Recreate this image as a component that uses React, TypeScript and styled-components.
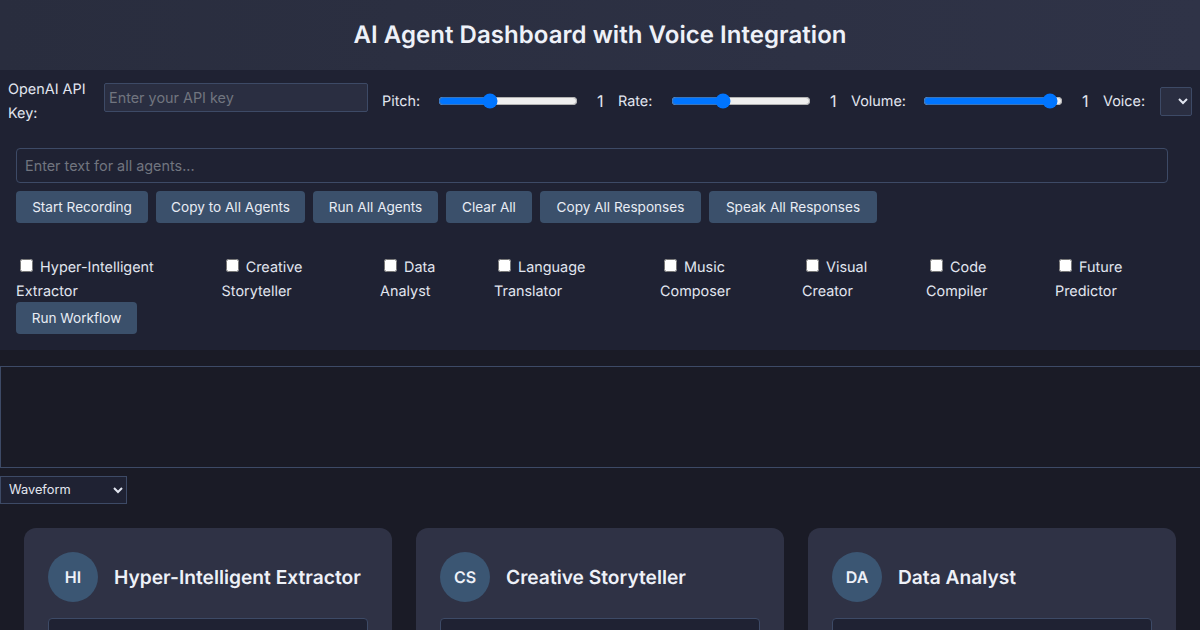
import { Fragment } from 'react';
import styled, { createGlobalStyle } from 'styled-components';

const GlobalStyle = createGlobalStyle`
  html, body {
    margin: 0;
    height: 630px;
    overflow: hidden;
    background: #1a1b26;
  }
  body {
    font-family: Inter, "Liberation Sans", sans-serif;
    font-size: 14.4px;
    line-height: 24px;
    color: #e2e6f0;
    text-rendering: geometricPrecision;
  }
`;

const Header = styled.header`
  height: 70px;
  display: flex;
  align-items: center;
  justify-content: center;
  background: linear-gradient(90deg, #292d3e, #2f3347);
`;

const Title = styled.h1`
  margin: 0;
  font-size: 24px;
  font-weight: 600;
  line-height: 1.2;
  letter-spacing: 0.05px;
  color: #eef1f8;
`;

const Panel = styled.section`
  background: #1f2233;
  height: 280px;
`;

const SettingsRow = styled.div`
  display: flex;
  align-items: center;
  height: 62px;
  padding: 0 8px;
  box-sizing: border-box;
`;

const ApiLabel = styled.label`
  width: 96px;
  flex: none;
  margin-top: 2px;
`;

const ApiInput = styled.input`
  width: 264px;
  height: 29px;
  box-sizing: border-box;
  flex: none;
  margin: -8px 14px 0 0;
  padding: 0 4px;
  background: #2a2e41;
  border: 1px solid #3d4a66;
  border-radius: 2px;
  color: #e2e6f0;
  font: inherit;
  &::placeholder {
    color: #71757f;
  }
`;

const SliderLabel = styled.label<{ $width: number }>`
  width: ${(p) => p.$width}px;
  flex: none;
  margin-top: 2px;
`;

const Slider = styled.input`
  width: 140px;
  flex: none;
  margin: 0;
`;

const SliderValue = styled.span`
  width: 40px;
  flex: none;
  padding-left: 19px;
  box-sizing: border-box;
  font-size: 16px;
`;

const VoiceSelect = styled.select`
  width: 32px;
  height: 29px;
  flex: none;
  background: #2a2e41;
  border: 1px solid #3d4a66;
  border-radius: 2px;
  color: #e2e6f0;
`;

const ComposeArea = styled.div`
  padding: 16px 16px 0;
`;

const BroadcastInput = styled.input`
  display: block;
  width: 1152px;
  height: 35px;
  box-sizing: border-box;
  padding: 0 8px;
  background: #1f2233;
  border: 1px solid #3d4a66;
  border-radius: 4px;
  color: #e2e6f0;
  font: inherit;
  &::placeholder {
    color: #71757f;
  }
`;

const ButtonRow = styled.div`
  display: flex;
  gap: 8px;
  margin-top: 8px;
`;

const Button = styled.button<{ $width: number }>`
  display: block;
  width: ${(p) => p.$width}px;
  height: 32px;
  padding: 0;
  background: #3b506b;
  border: none;
  border-radius: 4px;
  color: #e8ecf4;
  font-family: inherit;
  font-size: 13.6px;
`;

const WorkflowArea = styled.div`
  padding: 33px 16px 0;
`;

const AgentChecks = styled.div`
  display: grid;
  grid-template-columns: 205.6px 158.4px 114px 166px 142px 124px 129px 113px;
  height: 46px;
`;

const AgentCheck = styled.label`
  padding-right: 32px;
  &:last-child {
    padding-right: 0;
  }
`;

const Wave = styled.canvas`
  display: block;
  width: 1200px;
  height: 100px;
  margin-top: 16px;
  border: 1px solid #3d4a66;
  background: #1a1b26;
`;

const ViewSelect = styled.select`
  display: block;
  width: 127px;
  height: 28px;
  margin-top: 8px;
  padding: 0 4px 1px;
  background: #1f2233;
  border: 1px solid #3d4a66;
  color: #e2e6f0;
  font-family: inherit;
  font-size: 12.8px;
`;

const CardGrid = styled.main`
  display: grid;
  grid-template-columns: repeat(3, 1fr);
  gap: 24px;
  padding: 24px;
`;

const Card = styled.article`
  height: 300px;
  padding: 24px;
  background: #2f3245;
  border-radius: 12px;
  box-sizing: border-box;
`;

const CardHead = styled.div`
  display: flex;
  align-items: center;
  gap: 16px;
  margin-bottom: 16px;
`;

const Avatar = styled.div`
  width: 50px;
  height: 50px;
  flex: none;
  display: flex;
  align-items: center;
  justify-content: center;
  border-radius: 50%;
  background: #3b5673;
  color: #eef1f8;
  font-size: 16px;
  font-weight: 600;
`;

const AgentName = styled.h2`
  margin: 0;
  font-size: 19.2px;
  font-weight: 600;
  color: #eef1f8;
`;

const AgentInput = styled.textarea`
  display: block;
  width: 100%;
  height: 100px;
  box-sizing: border-box;
  background: #1f2233;
  border: 1px solid #3d4a66;
  border-radius: 4px;
`;

const sliders = [
  { label: 'Pitch:', width: 56, value: 35.5 },
  { label: 'Rate:', width: 53, value: 35.5 },
  { label: 'Volume:', width: 72, value: 96 },
];

const actions = [
  { label: 'Start Recording', width: 132 },
  { label: 'Copy to All Agents', width: 149 },
  { label: 'Run All Agents', width: 125 },
  { label: 'Clear All', width: 86 },
  { label: 'Copy All Responses', width: 161 },
  { label: 'Speak All Responses', width: 168 },
];

const agents = [
  'Hyper-Intelligent Extractor',
  'Creative Storyteller',
  'Data Analyst',
  'Language Translator',
  'Music Composer',
  'Visual Creator',
  'Code Compiler',
  'Future Predictor',
];

const cards = [
  { initials: 'HI', name: 'Hyper-Intelligent Extractor' },
  { initials: 'CS', name: 'Creative Storyteller' },
  { initials: 'DA', name: 'Data Analyst' },
];

const App = () => (
  <>
    <GlobalStyle />
    <Header>
      <Title>AI Agent Dashboard with Voice Integration</Title>
    </Header>
    <Panel>
      <SettingsRow>
        <ApiLabel>OpenAI API Key:</ApiLabel>
        <ApiInput placeholder="Enter your API key" />
        {sliders.map((s) => (
          <Fragment key={s.label}>
            <SliderLabel $width={s.width}>{s.label}</SliderLabel>
            <Slider type="range" min={0} max={100} step={0.5} defaultValue={s.value} />
            <SliderValue>1</SliderValue>
          </Fragment>
        ))}
        <SliderLabel $width={57}>Voice:</SliderLabel>
        <VoiceSelect />
      </SettingsRow>
      <ComposeArea>
        <BroadcastInput placeholder="Enter text for all agents..." />
        <ButtonRow>
          {actions.map((a) => (
            <Button key={a.label} $width={a.width}>{a.label}</Button>
          ))}
        </ButtonRow>
      </ComposeArea>
      <WorkflowArea>
        <AgentChecks>
          {agents.map((a) => (
            <AgentCheck key={a}>
              <input type="checkbox" /> {a}
            </AgentCheck>
          ))}
        </AgentChecks>
        <Button $width={121}>Run Workflow</Button>
      </WorkflowArea>
    </Panel>
    <Wave />
    <ViewSelect defaultValue="Waveform">
      <option>Waveform</option>
    </ViewSelect>
    <CardGrid>
      {cards.map((c) => (
        <Card key={c.initials}>
          <CardHead>
            <Avatar>{c.initials}</Avatar>
            <AgentName>{c.name}</AgentName>
          </CardHead>
          <AgentInput />
        </Card>
      ))}
    </CardGrid>
  </>
);

export default App;
